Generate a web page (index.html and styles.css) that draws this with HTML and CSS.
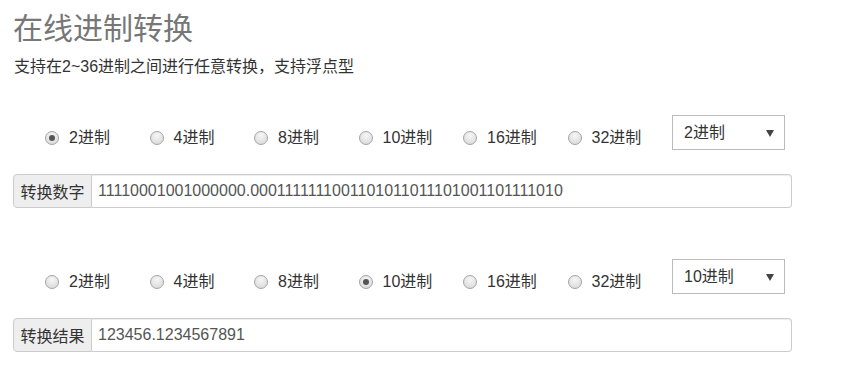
FILE: index.html
```html
<!DOCTYPE html>
<html lang="zh-CN">
<head>
<meta charset="utf-8">
<title>在线进制转换</title>
<link rel="stylesheet" href="styles.css">
</head>
<body>
<div class="page">
  <h1 class="title">在线进制转换</h1>
  <p class="subtitle">支持在2~36进制之间进行任意转换，支持浮点型</p>

  <section class="block block-first">
    <div class="radio-row">
      <label class="opt"><input type="radio" name="from" checked><span>2进制</span></label>
      <label class="opt"><input type="radio" name="from"><span>4进制</span></label>
      <label class="opt"><input type="radio" name="from"><span>8进制</span></label>
      <label class="opt"><input type="radio" name="from"><span>10进制</span></label>
      <label class="opt"><input type="radio" name="from"><span>16进制</span></label>
      <label class="opt"><input type="radio" name="from"><span>32进制</span></label>
      <span class="select-wrap"><select class="select"><option>2进制</option></select></span>
    </div>
    <div class="input-group">
      <span class="addon">转换数字</span>
      <input class="field" type="text" value="11110001001000000.0001111111001101011011101001101111010">
    </div>
  </section>

  <section class="block">
    <div class="radio-row">
      <label class="opt"><input type="radio" name="to"><span>2进制</span></label>
      <label class="opt"><input type="radio" name="to"><span>4进制</span></label>
      <label class="opt"><input type="radio" name="to"><span>8进制</span></label>
      <label class="opt"><input type="radio" name="to" checked><span>10进制</span></label>
      <label class="opt"><input type="radio" name="to"><span>16进制</span></label>
      <label class="opt"><input type="radio" name="to"><span>32进制</span></label>
      <span class="select-wrap"><select class="select"><option>10进制</option></select></span>
    </div>
    <div class="input-group">
      <span class="addon">转换结果</span>
      <input class="field" type="text" value="123456.1234567891">
    </div>
  </section>
</div>
</body>
</html>
```
FILE: styles.css
```css
* { box-sizing: border-box; }
body {
  margin: 0;
  background: #fff;
  color: #333;
  font-family: "Liberation Sans", "Noto Sans CJK SC", sans-serif;
  font-size: 16px;
}
.page {
  padding: 11px 50px 0 13px;
  width: 842px;
}
.title {
  margin: 0;
  font-size: 30px;
  font-weight: normal;
  line-height: 36px;
  color: #777;
}
.subtitle {
  margin: 10px 0 0 1px;
  font-size: 16px;
  line-height: 20px;
  color: #333;
}
.block-first { margin-top: 38px; }
.block + .block { margin-top: 51px; }
.radio-row {
  display: grid;
  grid-template-columns: repeat(6, 104.5px) 113px;
  align-items: center;
  padding-left: 32px;
  height: 35px;
}
.opt {
  display: flex;
  align-items: center;
  gap: 10px;
  padding-top: 10px;
  color: #333;
  line-height: 20px;
}
.opt input {
  appearance: none;
  -webkit-appearance: none;
  margin: 0;
  width: 14px;
  height: 14px;
  border-radius: 50%;
  border: 1px solid #a4a4a4;
  background: radial-gradient(circle at 50% 30%, #f6f6f6 0%, #d6d6d6 100%);
  position: relative;
  flex: none;
}
.opt input:checked::after {
  content: "";
  position: absolute;
  left: 3px;
  top: 3px;
  width: 6px;
  height: 6px;
  border-radius: 50%;
  background: #555;
}
.select-wrap {
  position: relative;
  display: block;
  height: 35px;
}
.select {
  appearance: none;
  -webkit-appearance: none;
  width: 113px;
  height: 35px;
  border: 1px solid #bbb;
  border-radius: 0;
  background: #fff;
  padding: 0 0 0 11px;
  font: inherit;
  color: #333;
}
.select-wrap::after {
  content: "";
  position: absolute;
  right: 11px;
  top: 15px;
  border-left: 4px solid transparent;
  border-right: 4px solid transparent;
  border-top: 7px solid #444;
  pointer-events: none;
}
.input-group {
  display: flex;
  margin-top: 24px;
  height: 34px;
  width: 779px;
}
.addon {
  flex: none;
  width: 79px;
  display: flex;
  align-items: center;
  justify-content: center;
  background: #eee;
  border: 1px solid #ccc;
  border-radius: 4px 0 0 4px;
  color: #333;
}
.field {
  flex: 1;
  min-width: 0;
  height: 34px;
  border: 1px solid #ccc;
  border-left: 0;
  border-radius: 0 4px 4px 0;
  padding: 0 6px;
  font: inherit;
  color: #555;
  box-shadow: inset 0 1px 1px rgba(0,0,0,0.075);
}
```
